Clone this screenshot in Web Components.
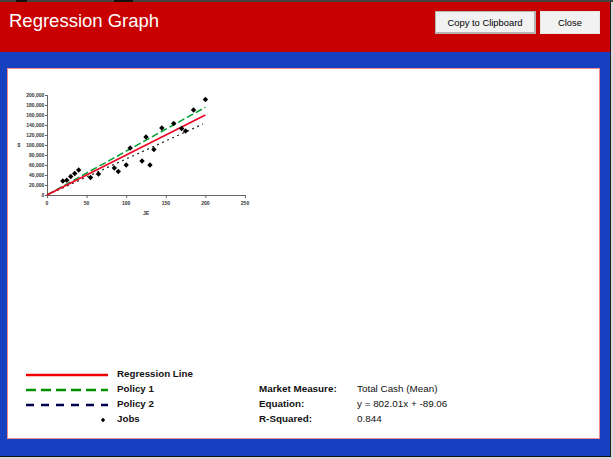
<!DOCTYPE html>
<html>
<head>
<meta charset="utf-8">
<title>Regression Graph</title>
<style>
    html, body { margin: 0; padding: 0; height: 100%; background: #d8d8dc; overflow: hidden; }
    body { font-family: "Liberation Sans", Arial, sans-serif; }
</style>
</head>
<body>
<regression-window>
    <span slot="title">Regression Graph</span>
    <win-button slot="actions" default>Copy to Clipboard</win-button>
    <win-button slot="actions">Close</win-button>
    <regression-chart slot="chart"></regression-chart>
    <legend-row slot="legend" line="solid" color="#f00000">Regression Line</legend-row>
    <legend-row slot="legend" line="dash" color="#009000">Policy 1</legend-row>
    <legend-row slot="legend" line="dash2" color="#000050">Policy 2</legend-row>
    <legend-row slot="legend" line="dot" color="#000">Jobs</legend-row>
    <stat-row slot="stats" label="Market Measure:">Total Cash (Mean)</stat-row>
    <stat-row slot="stats" label="Equation:">y = 802.01x + -89.06</stat-row>
    <stat-row slot="stats" label="R-Squared:">0.844</stat-row>
</regression-window>

<script>
class RegressionWindow extends HTMLElement {
    constructor() {
        super();
        this.attachShadow({ mode: 'open' });
        this.shadowRoot.innerHTML = `
            <style>
                :host { display: flex; flex-direction: column; width: 613px; height: 459px; }
                .top { height: 2px; background: linear-gradient(90deg, #444 0 16px, #111 16px 27px, #444 27px 114px, #111 114px 133px, #444 133px); }
                .frame { width: 611px; box-sizing: border-box; border-right: 1px solid #222; }
                .header { height: 50px; background: #c80000; display: flex; justify-content: space-between; box-sizing: border-box; padding: 9px 10px 0 9px; }
                .title { color: #fff; font-size: 18.5px; line-height: 20px; }
                .actions { display: flex; gap: 4px; align-items: flex-start; }
                .body { height: 404px; background: #1540c0; box-sizing: border-box; padding: 16px 10px 17px 7px; }
                .sheet { height: 100%; background: #fff; border: 1px solid #f08a8a; box-sizing: border-box; display: flex; flex-direction: column; justify-content: space-between; }
                .foot { display: flex; align-items: flex-end; padding: 0 0 12px 18px; }
                .legend { width: 233px; display: flex; flex-direction: column; }
                .stats { display: flex; flex-direction: column; }
                .bottom { width: 611px; height: 1px; background: #111; }
            </style>
            <div class="top"></div>
            <div class="frame">
                <div class="header">
                    <div class="title"><slot name="title"></slot></div>
                    <div class="actions"><slot name="actions"></slot></div>
                </div>
                <div class="body">
                    <div class="sheet">
                        <slot name="chart"></slot>
                        <div class="foot">
                            <div class="legend"><slot name="legend"></slot></div>
                            <div class="stats"><slot name="stats"></slot></div>
                        </div>
                    </div>
                </div>
            </div>
            <div class="bottom"></div>
        `;
    }
}

class WinButton extends HTMLElement {
    constructor() {
        super();
        this.attachShadow({ mode: 'open' });
        this.shadowRoot.innerHTML = `
            <style>
                :host { display: block; font-size: 9.4px; color: #000; }
                .btn { width: 60px; height: 23px; box-sizing: border-box; background: #f2f2f2; display: flex; align-items: center; justify-content: center; border: 1px solid #e8e8e8; }
                :host([default]) .btn { width: 101px; border: 1px solid #b4b4b4; border-bottom-width: 2px; border-right-width: 2px; }
            </style>
            <div class="btn"><slot></slot></div>
        `;
    }
}

class LegendRow extends HTMLElement {
    constructor() {
        super();
        this.attachShadow({ mode: 'open' });
    }

    connectedCallback() {
        const color = this.getAttribute('color');
        const line = this.getAttribute('line');
        let mark = `<path d="M0 9H82" stroke="${color}" stroke-width="2.4"/>`;
        if (line === 'dash') {
            mark = `<path d="M0 9H82" stroke="${color}" stroke-width="2.4" stroke-dasharray="10 5"/>`;
        } else if (line === 'dash2') {
            mark = `<path d="M0 9H82" stroke="${color}" stroke-width="2.4" stroke-dasharray="8 7"/>`;
        } else if (line === 'dot') {
            mark = `<path d="M77 6.8L79.2 9L77 11.2L74.8 9Z" fill="${color}"/>`;
        }
        this.shadowRoot.innerHTML = `
            <style>
                :host { display: flex; align-items: center; gap: 9px; height: 15px; font-size: 9.75px; font-weight: bold; color: #111; }
                svg { display: block; width: 82px; height: 15px; flex: none; }
            </style>
            <svg viewBox="0 0 82 15">${mark}</svg>
            <slot></slot>
        `;
    }
}

class StatRow extends HTMLElement {
    constructor() {
        super();
        this.attachShadow({ mode: 'open' });
    }

    connectedCallback() {
        this.shadowRoot.innerHTML = `
            <style>
                :host { display: flex; height: 15px; align-items: center; font-size: 9.85px; color: #111; }
                .label { width: 98px; font-weight: bold; }
            </style>
            <div class="label">${this.getAttribute('label')}</div>
            <div><slot></slot></div>
        `;
    }
}

class RegressionChart extends HTMLElement {
    constructor() {
        super();
        this.attachShadow({ mode: 'open' });
    }

    connectedCallback() {
        // page coords: x 0 -> 47, 250 -> 245; y 0 -> 195, 200k -> 95
        const sx = v => 47 + v * 198 / 250;
        const sy = v => 195 - v * 100 / 200000;
        const jobs = [[20,28000],[25,29500],[30,37000],[35,43000],[40,50000],[55,35000],[65,42000],[85,54000],[90,47000],[100,60000],[105,94000],
            [120,68000],[125,116000],[130,60000],[135,91000],[145,134000],[160,143000],[170,133000],[175,128000],[185,170000],[200,191000]];
        let svg = '';
        svg += `<path d="M47.5 95V195.5H245" fill="none" stroke="#666" stroke-width="1"/>`;
        for (let v = 0; v <= 200000; v += 20000) {
            const y = sy(v);
            svg += `<path d="M45 ${y + 0.5}H47" stroke="#666"/>`;
            svg += `<text x="44.4" y="${y + 1.8}" text-anchor="end">${v === 0 ? '0' : v.toLocaleString('en-US')}</text>`;
        }
        for (let v = 0; v <= 250; v += 50) {
            const x = sx(v);
            svg += `<path d="M${x + 0.5} 195V198" stroke="#666"/>`;
            svg += `<text x="${x}" y="204.8" text-anchor="middle">${v}</text>`;
        }
        svg += `<text x="19" y="146.8" text-anchor="middle">$</text>`;
        svg += `<text x="146" y="214.8" text-anchor="middle">JE</text>`;
        // the lines
        svg += `<line x1="${sx(0)}" y1="${sy(0)}" x2="${sx(197)}" y2="${sy(142000)}" stroke="#222" stroke-width="1.2" stroke-dasharray="2 3.5"/>`;
        svg += `<line x1="${sx(0)}" y1="${sy(0)}" x2="${sx(200)}" y2="${sy(175500)}" stroke="#00a030" stroke-width="1.5" stroke-dasharray="7 3"/>`;
        svg += `<line x1="${sx(0)}" y1="${sy(0)}" x2="${sx(200)}" y2="${sy(160000)}" stroke="#f00020" stroke-width="1.5"/>`;
        jobs.forEach(([a, b]) => {
            const x = sx(a);
            const y = sy(b);
            svg += `<path d="M${x} ${y - 2.7}L${x + 2.7} ${y}L${x} ${y + 2.7}L${x - 2.7} ${y}Z" fill="#000"/>`;
        });
        // svg origin sits at the inner corner of the sheet (8,69)
        this.shadowRoot.innerHTML = `
            <style>
                :host { display: block; height: 160px; }
                svg { display: block; width: 260px; height: 160px; }
                text { font: bold 5px "Liberation Sans", Arial, sans-serif; fill: #333; }
            </style>
            <svg viewBox="8 69 260 160">${svg}</svg>
        `;
    }
}

customElements.define('regression-window', RegressionWindow);
customElements.define('win-button', WinButton);
customElements.define('legend-row', LegendRow);
customElements.define('stat-row', StatRow);
customElements.define('regression-chart', RegressionChart);
</script>
</body>
</html>
